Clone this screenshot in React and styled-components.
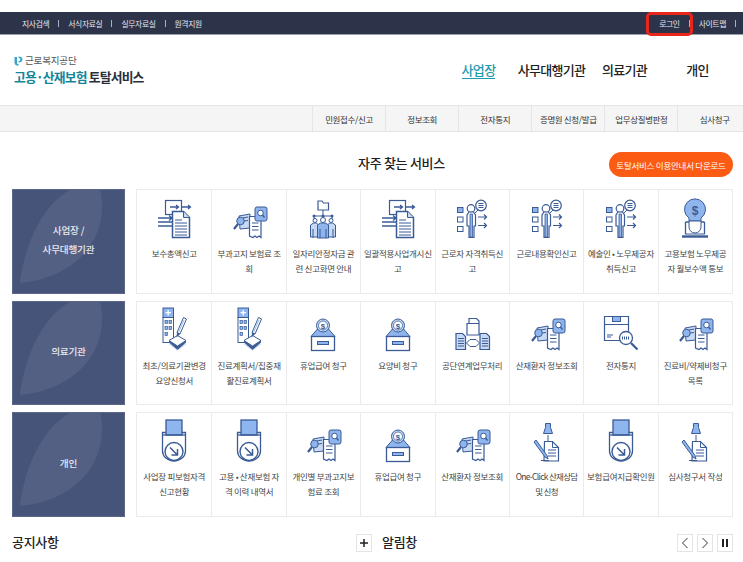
import React from 'react';
import styled, { createGlobalStyle } from 'styled-components';

const GlobalStyle = createGlobalStyle`
  html, body {
    margin: 0;
    padding: 0;
    background: #fff;
    overflow: hidden;
  }
  body {
    font-family: "Noto Sans CJK KR", "Noto Sans", sans-serif;
    color: #333;
  }
  * { box-sizing: border-box; }
`;

const STROKE = '#3a5b96';
const FILL = '#8fb5ee';
const PALE = '#c8d9f4';

const Page = styled.div`
  width: 743px;
  height: 562px;
  padding-top: 12px;
`;

const TopBar = styled.div`
  height: 23px;
  background: #2d3349;
  border-bottom: 1px solid #9aa0ad;
  display: flex;
  justify-content: space-between;
  align-items: center;
  padding: 0 6px 0 22px;
`;

const TopList = styled.div`
  display: flex;
  align-items: center;
  gap: 8px;
`;

const TopLink = styled.a`
  position: relative;
  font-size: 7.8px;
  letter-spacing: -0.35px;
  color: #e6e8ee;
  white-space: nowrap;

  ${props => props.highlight && `
    &::after {
      content: '';
      position: absolute;
      left: -13px;
      right: -13px;
      top: -6px;
      bottom: -7px;
      border: 3.5px solid #e8261c;
      border-radius: 5px;
    }
  `}
`;

const TopSep = styled.span`
  width: 1px;
  height: 7px;
  margin: 0 1px;
  background: #a9aebb;
`;

const Header = styled.header`
  height: 70px;
  display: flex;
  justify-content: space-between;
  align-items: center;
  padding: 0 9px 0 14px;
`;

const Logo = styled.div`
  display: flex;
  flex-direction: column;
  gap: 1px;
`;

const LogoTop = styled.div`
  display: flex;
  align-items: center;
  gap: 2px;
  font-size: 9.5px;
  line-height: 13px;
  letter-spacing: -0.15px;
  color: #555;
`;

const LogoMain = styled.div`
  font-size: 12.8px;
  line-height: 18px;
  font-weight: 700;
  letter-spacing: -0.8px;
  color: #2a2f3a;

  span {
    color: #15859a;
  }
`;

const MainNav = styled.nav`
  display: grid;
  grid-template-columns: repeat(4, 73px);
`;

const MainNavItem = styled.a`
  justify-self: center;
  font-size: 13px;
  line-height: 17px;
  font-weight: 500;
  letter-spacing: -0.7px;
  white-space: nowrap;
  color: ${props => (props.active ? '#1b9bb0' : '#222')};
  border-bottom: ${props => (props.active ? '1px solid #1b9bb0' : '1px solid transparent')};
`;

const SubNav = styled.div`
  height: 27px;
  background: #f5f5f5;
  border-top: 1px solid #e5e5e5;
  border-bottom: 1px solid #e5e5e5;
  display: grid;
  grid-template-columns: 312px repeat(5, 73.1px) 1fr;
`;

const SubNavItem = styled.a`
  grid-column: ${props => props.index + 2};
  display: flex;
  align-items: center;
  justify-content: center;
  padding-left: ${props => (props.index === 5 ? '8px' : '0')};
  border-left: 1px solid #e5e5e5;
  font-size: 8.5px;
  letter-spacing: -0.35px;
  color: #333;
  white-space: nowrap;
`;

const TitleRow = styled.div`
  height: 57px;
  display: flex;
  align-items: center;
  padding: 8px 10px 0 358px;
`;

const Title = styled.h2`
  margin: 0 0 4px;
  font-size: 13px;
  font-weight: 500;
  letter-spacing: -0.3px;
  color: #222;
`;

const GuideButton = styled.button`
  margin-left: auto;
  width: 124px;
  height: 25px;
  border: none;
  border-radius: 13px;
  background: #fb5b12;
  color: #fff;
  font-family: inherit;
  font-size: 8.5px;
  letter-spacing: -0.25px;
  padding: 0;
`;

const Rows = styled.div`
  display: flex;
  flex-direction: column;
  gap: 7px;
  padding: 0 10px 0 12px;
`;

const Row = styled.section`
  display: grid;
  grid-template-columns: 113px 1fr;
  column-gap: 11px;
  height: 104.5px;
`;

const SidePanel = styled.div`
  position: relative;
  overflow: hidden;
  background: #47547a;
  border: 1px solid #5a6789;
  padding-bottom: 2px;
  display: flex;
  align-items: center;
  justify-content: center;
  text-align: center;
  color: #e8e9ee;
  font-size: 9.6px;
  font-weight: 500;
  line-height: 19px;
  letter-spacing: -0.2px;
  white-space: pre-line;
`;

const PanelLeaf = styled.svg`
  position: absolute;
  inset: 0;
  width: 100%;
  height: 100%;
`;

const PanelText = styled.span`
  position: relative;
`;

const Grid = styled.div`
  display: grid;
  grid-template-columns: repeat(8, 1fr);
  border: 1px solid #ebebeb;
`;

const Cell = styled.a`
  display: flex;
  flex-direction: column;
  align-items: center;
  min-width: 0;
  border-left: ${props => (props.first ? 'none' : '1px solid #ebebeb')};
`;

const IconSlot = styled.div`
  height: 50px;
  display: flex;
  align-items: flex-end;
  margin-bottom: 6px;

  svg {
    display: block;
  }
`;

const CellLabel = styled.span`
  font-size: 8.5px;
  line-height: 15px;
  letter-spacing: ${props => (props.tight ? '-0.7px' : '-0.3px')};
  color: #444;
  text-align: center;
  white-space: pre-line;
`;

const Footer = styled.div`
  display: flex;
  align-items: center;
  margin-top: 15px;
  padding: 0 10px 0 12px;
`;

const NoticeHead = styled.div`
  width: 360px;
  display: flex;
  align-items: center;
  justify-content: space-between;
`;

const FooterTitle = styled.h3`
  margin: 0 0 3px;
  font-size: 13px;
  font-weight: 500;
  letter-spacing: -0.3px;
  color: #222;
`;

const AlertHead = styled.div`
  flex: 1;
  display: flex;
  align-items: center;
  justify-content: space-between;
  padding-left: 10px;
`;

const Controls = styled.div`
  display: flex;
  gap: 3.5px;
`;

const SquareButton = styled.button`
  width: 16.5px;
  height: 18px;
  padding: 0;
  background: #fff;
  border: 1px solid #e4e4e4;
  display: flex;
  align-items: center;
  justify-content: center;
`;

const Line = ({ d }) => <path d={d} fill="none" stroke={STROKE} strokeWidth="1" />;

const DocArrows = () => (
  <svg width="48" height="48" viewBox="0 0 48 48">
    <rect x="15.5" y="8.5" width="16" height="14" fill="#fff" stroke={STROKE} strokeWidth="1.2" />
    <path d="M22.5 19.5h11l6 6v20h-17z" fill="#fff" stroke={STROKE} strokeWidth="1.5" />
    <path d="M33.5 19.5v6h6" fill={PALE} stroke={STROKE} />
    <Line d="M25 28h7M25 31h12M25 34h12M25 37h12M25 40h12M25 43h12" />
    <path d="M20 15h8M26 13l2.500 2-2.500 2M31 15h9M38 13l2.500 2-2.500 2" fill="none" stroke={STROKE} strokeWidth="1.300" />
    <path d="M8 26h14M8 30h14M8 34h14M19 23.500l3 2.500-3 2.500" fill="none" stroke={STROKE} strokeWidth="1.300" />
  </svg>
);

const ReceiptSearch = () => (
  <svg width="48" height="48" viewBox="0 0 48 48">
    <path d="M14 24l11-2v14l-10 1z" fill={PALE} stroke={STROKE} />
    <Line d="M18 26l5-1M19 29l4-.5" />
    <circle cx="15.500" cy="29" r="3.800" fill={FILL} stroke={STROKE} />
    <path d="M13 32L9 37" stroke={STROKE} strokeWidth="2.200" />
    <path d="M24.500 24.500h11.500v21l-2-1.500-2 1.500-2-1.500-2 1.500-3.500-1.500z" fill="#fff" stroke={STROKE} strokeWidth="1.200" />
    <Line d="M27 31h6.500M27 34.500h6.500M27 38h6.500" />
    <rect x="30" y="15" width="12" height="14" rx="2" fill={FILL} stroke={STROKE} />
    <circle cx="35.500" cy="21" r="2.800" fill="#fff" stroke={STROKE} />
    <path d="M37.500 23l2 2.500" stroke={STROKE} strokeWidth="1.300" />
  </svg>
);

const OrgPeople = () => (
  <svg width="48" height="48" viewBox="0 0 48 48">
    <path d="M19 9h4l1.500 2h5v7h-10.500z" fill="#fff" stroke={STROKE} strokeWidth="1.200" />
    <Line d="M24 18v9M15 24h18M15 24v3M33 24v3" />
    <circle cx="24" cy="24" r="1.500" fill={STROKE} />
    <circle cx="15" cy="24" r="1.500" fill={STROKE} />
    <circle cx="33" cy="24" r="1.500" fill={STROKE} />
    <path d="M11.500 45V33l3-2h3l2 2v12z" fill={PALE} stroke={STROKE} />
    <path d="M28.500 45V33l2-2h3l3 2v12z" fill={PALE} stroke={STROKE} />
    <circle cx="16" cy="28.500" r="2" fill="#fff" stroke={STROKE} />
    <circle cx="32" cy="28.500" r="2" fill="#fff" stroke={STROKE} />
    <path d="M18.500 46V33l3-2h5l3 2v13z" fill={FILL} stroke={STROKE} />
    <circle cx="24" cy="28" r="2.500" fill="#fff" stroke={STROKE} />
    <Line d="M14 37v9M34 37v9M21 37v9M27 37v9" />
  </svg>
);

const PersonList = () => (
  <svg width="48" height="48" viewBox="0 0 48 48">
    <rect x="9.500" y="15.500" width="5.500" height="5" fill={FILL} stroke={STROKE} />
    <rect x="9.500" y="25" width="5.500" height="5" fill="#fff" stroke={STROKE} />
    <rect x="9.500" y="34.500" width="5.500" height="5" fill="#fff" stroke={STROKE} />
    <circle cx="23" cy="16.500" r="3.800" fill="#fff" stroke={STROKE} strokeWidth="1.200" />
    <path d="M19 34V23l2-3h4.500l2 3v11h-1.500v11.500h-5V34z" fill="#fff" stroke={STROKE} strokeWidth="1.200" />
    <path d="M22 22h2.500v23h-2.500z" fill={FILL} stroke={STROKE} strokeWidth="0.800" />
    <path d="M27 21l3-3" stroke={STROKE} />
    <circle cx="33" cy="13.500" r="5.300" fill="#fff" stroke={STROKE} strokeWidth="1.200" />
    <Line d="M30.500 11.500h5M30.500 13.500h5M30.500 15.500h5" />
    <path d="M30 25h8.500M36 22.500l2.500 2.500-2.500 2.500M30 33.500h8.500M36 31l2.500 2.500-2.500 2.500" fill="none" stroke={STROKE} strokeWidth="1.200" />
  </svg>
);

const MoneyBulb = () => (
  <svg width="48" height="48" viewBox="0 0 48 48">
    <path d="M14.500 30v12M33.500 30v12M14.500 30h4M33.500 30h-4" fill="none" stroke={STROKE} strokeWidth="1.300" />
    <path d="M18 26a10.500 10.500 0 1 1 12 0v3h-12z" fill={FILL} stroke={STROKE} />
    <path d="M18 29h12v6a6 6 0 0 1-12 0z" fill="#fff" stroke={STROKE} />
    <text x="24" y="23" textAnchor="middle" fontSize="12" fontWeight="700" fill={STROKE} fontFamily="Liberation Sans, sans-serif">$</text>
    <path d="M11 44.500h26" stroke={STROKE} strokeWidth="2.400" />
    <path d="M14 42h20" stroke={STROKE} />
  </svg>
);

const BuildingPen = () => (
  <svg width="48" height="48" viewBox="0 0 48 48">
    <rect x="13" y="4" width="10.500" height="9.500" fill={FILL} stroke={STROKE} />
    <path d="M18.200 6v5.500M15.500 8.700h5.500" stroke="#fff" strokeWidth="1.300" />
    <rect x="13" y="13.500" width="10.500" height="25" fill="#fff" stroke={STROKE} />
    <g fill={FILL} stroke={STROKE} strokeWidth="0.700">
      <rect x="15" y="16.500" width="2.500" height="3" />
      <rect x="19" y="16.500" width="2.500" height="3" />
      <rect x="15" y="22.500" width="2.500" height="3" />
      <rect x="19" y="22.500" width="2.500" height="3" />
      <rect x="15" y="28.500" width="2.500" height="3" />
    </g>
    <path d="M19 38.500l8.500 7.500 8.500-7.500v-2l-8.500 5.500-8.500-5.500z" fill={STROKE} />
    <path d="M19 36.500l8.500-5 8.500 5-8.500 5.500z" fill="#fff" stroke={STROKE} />
    <path d="M19 40l8.500 6 8.500-6" fill="none" stroke="#9db5dc" strokeWidth="0.600" />
    <path d="M33.500 13.500l3 1.500-6.500 15-3-1.500z" fill="#fff" stroke={STROKE} />
    <path d="M34 16l-5.500 12.500" stroke={FILL} strokeWidth="0.900" />
    <path d="M27 28.500l-.5 5 3.500-3.500z" fill={STROKE} />
  </svg>
);

const BoxCoin = () => (
  <svg width="48" height="48" viewBox="0 0 48 48">
    <path d="M18.500 25h11l6.500 7.500h-24z" fill={FILL} stroke={STROKE} />
    <circle cx="24" cy="21.500" r="6.500" fill={PALE} stroke={STROKE} />
    <circle cx="24" cy="21.500" r="4.500" fill="#fff" stroke={STROKE} strokeWidth="0.800" />
    <text x="24" y="24.500" textAnchor="middle" fontSize="8" fontWeight="700" fill={STROKE} fontFamily="Liberation Sans, sans-serif">$</text>
    <rect x="12.500" y="32.500" width="23" height="14" fill="#fff" stroke={STROKE} strokeWidth="1.300" />
    <rect x="18.500" y="37.500" width="11" height="3" fill={FILL} stroke={STROKE} />
  </svg>
);

const FolderDocs = () => (
  <svg width="48" height="48" viewBox="0 0 48 48">
    <path d="M21 19v-4.500h7.500l2.500 2.500v2" fill="#fff" stroke={STROKE} strokeWidth="1.200" />
    <path d="M19 19.500h12v11.500h-12z" fill="#fff" stroke={STROKE} strokeWidth="1.200" />
    <path d="M8 29.500h6.500l3 3v13h-9.500z" fill={PALE} stroke={STROKE} strokeWidth="1.200" />
    <path d="M32 29.500h6.500l3 3v13h-9.500z" fill={PALE} stroke={STROKE} strokeWidth="1.200" />
    <Line d="M10 34.500h6M10 37h6M10 39.500h6M10 42h6M34 34.500h6M34 37h6M34 39.500h6M34 42h6" />
    <path d="M18.500 39l3.500-3.500h6l3.500 3.500-3.500 3.500h-6z" fill="#fff" stroke={STROKE} />
  </svg>
);

const BoxSearch = () => (
  <svg width="48" height="48" viewBox="0 0 48 48">
    <path d="M7.500 12.500h24v24h-24zM7.500 20.500h24" fill="#fff" stroke={STROKE} strokeWidth="1.200" />
    <rect x="15.500" y="12.500" width="8" height="5" fill={FILL} stroke={STROKE} />
    <Line d="M10 33h4M10 31h6" />
    <circle cx="29" cy="34" r="6.500" fill="#fff" stroke={STROKE} strokeWidth="1.300" />
    <path d="M25.500 32.500v3M27.500 32.500v3M29.500 32.500v3M31.500 32.500v3" stroke={STROKE} />
    <path d="M34 39l6.500 6.500" stroke={STROKE} strokeWidth="2.200" />
  </svg>
);

const ScanArrow = () => (
  <svg width="48" height="48" viewBox="0 0 48 48">
    <path d="M12.500 17.500h23V36a11.500 10 0 0 1-23 0z" fill="#fff" stroke={STROKE} strokeWidth="1.300" />
    <rect x="16" y="5" width="16" height="15" fill={FILL} stroke={STROKE} strokeWidth="1.300" />
    <path d="M12.500 20h23" stroke={STROKE} strokeWidth="1.300" />
    <circle cx="24" cy="36.500" r="9" fill="#fff" stroke={STROKE} strokeWidth="1.400" />
    <path d="M20 32.500l7.500 7.500M27.500 34v6h-6" fill="none" stroke={STROKE} strokeWidth="1.500" />
  </svg>
);

const PinDoc = () => (
  <svg width="48" height="48" viewBox="0 0 48 48">
    <path d="M25 20v12" stroke={STROKE} />
    <path d="M22.500 8.500h5v4l2 6h-9l2-6z" fill={FILL} stroke={STROKE} />
    <path d="M21.500 26.500h8l6 6v13.500h-14.500z" fill="#fff" stroke={STROKE} strokeWidth="1.200" />
    <path d="M29.500 26.500v6h6" fill="none" stroke={STROKE} />
    <Line d="M25 35h8M25 38h8M25 41h8" />
    <path d="M13 25l-2 2 11 15 3 2-1-3.500z" fill={FILL} stroke={STROKE} />
    <path d="M18 45.500h8" stroke={STROKE} />
  </svg>
);

const topLeft = ['지사검색', '서식자료실', '실무자료실', '원격지원'];
const mainNav = ['사업장', '사무대행기관', '의료기관', '개인'];
const subNav = ['민원접수/신고', '정보조회', '전자통지', '증명원 신청/발급', '업무상질병판정', '심사청구'];

const sections = [
  {
    name: '사업장 /\n사무대행기관',
    items: [
      [DocArrows, '보수총액신고'],
      [ReceiptSearch, '부과고지 보험료 조\n회'],
      [OrgPeople, '일자리안정자금 관\n련 신고화면 안내'],
      [DocArrows, '일괄적용사업개시신\n고'],
      [PersonList, '근로자 자격취득신\n고'],
      [PersonList, '근로내용확인신고'],
      [PersonList, '예술인 • 노무제공자\n취득신고'],
      [MoneyBulb, '고용보험 노무제공\n자 월보수액 통보'],
    ],
  },
  {
    name: '의료기관',
    items: [
      [BuildingPen, '최초/의료기관변경\n요양신청서'],
      [BuildingPen, '진료계획서/집중재\n활진료계획서'],
      [BoxCoin, '휴업급여 청구'],
      [BoxCoin, '요양비 청구'],
      [FolderDocs, '공단연계업무처리'],
      [ReceiptSearch, '산재환자 정보조회'],
      [BoxSearch, '전자통지'],
      [ReceiptSearch, '진료비/약제비청구\n목록'],
    ],
  },
  {
    name: '개인',
    items: [
      [ScanArrow, '사업장 피보험자격\n신고현황'],
      [ScanArrow, '고용 • 산재보험 자\n격 이력 내역서'],
      [ReceiptSearch, '개인별 부과고지보\n험료 조회'],
      [BoxCoin, '휴업급여 청구'],
      [ReceiptSearch, '산재환자 정보조회'],
      [PinDoc, 'One-Click 산재상담\n및 신청'],
      [ScanArrow, '보험급여지급확인원'],
      [PinDoc, '심사청구서 작성'],
    ],
  },
];

function App() {
  return (
    <Page>
      <GlobalStyle />
      <TopBar>
        <TopList>
          {topLeft.map((label, i) => (
            <React.Fragment key={label}>
              {i > 0 && <TopSep />}
              <TopLink>{label}</TopLink>
            </React.Fragment>
          ))}
        </TopList>
        <TopList>
          <TopLink highlight>로그인</TopLink>
          <TopSep />
          <TopLink>사이트맵</TopLink>
          <TopSep />
        </TopList>
      </TopBar>

      <Header>
        <Logo>
          <LogoTop>
            <svg width="9" height="10" viewBox="0 0 9 10">
              <path d="M0.500 1h2.500v5.500c0 1 .5 1.500 1.500 1.500v1.800C2 9.800 0.500 8.500 0.500 6.500z" fill="#3aa6c8" />
              <path d="M4.500 0.500C7 0.500 8.500 1.500 8.500 3.500S7 6.500 4.500 6.500V5c1 0 1.800-.5 1.800-1.500S5.500 2 4.500 2z" fill="#3aa6c8" />
            </svg>
            근로복지공단
          </LogoTop>
          <LogoMain><span>고용·산재보험</span> 토탈서비스</LogoMain>
        </Logo>
        <MainNav>
          {mainNav.map((label, i) => (
            <MainNavItem key={label} active={i === 0}>{label}</MainNavItem>
          ))}
        </MainNav>
      </Header>

      <SubNav>
        {subNav.map((label, i) => (
          <SubNavItem key={label} index={i}>{label}</SubNavItem>
        ))}
      </SubNav>

      <TitleRow>
        <Title>자주 찾는 서비스</Title>
        <GuideButton>토탈서비스 이용안내서 다운로드</GuideButton>
      </TitleRow>

      <Rows>
        {sections.map(section => (
          <Row key={section.name}>
            <SidePanel>
              <PanelLeaf viewBox="0 0 113 104" preserveAspectRatio="none">
                <path d="M58 0C30 15 12 55 7 94 50 92 100 60 89 0z" fill="#fff" opacity="0.07" />
              </PanelLeaf>
              <PanelText>{section.name}</PanelText>
            </SidePanel>
            <Grid>
              {section.items.map(([Icon, label], i) => (
                <Cell key={label} first={i === 0}>
                  <IconSlot><Icon /></IconSlot>
                  <CellLabel tight={label.startsWith('One')}>{label}</CellLabel>
                </Cell>
              ))}
            </Grid>
          </Row>
        ))}
      </Rows>

      <Footer>
        <NoticeHead>
          <FooterTitle>공지사항</FooterTitle>
          <SquareButton aria-label="더보기">
            <svg width="10" height="10" viewBox="0 0 10 10">
              <path d="M5 1v8M1 5h8" stroke="#222" strokeWidth="1.500" />
            </svg>
          </SquareButton>
        </NoticeHead>
        <AlertHead>
          <FooterTitle>알림창</FooterTitle>
          <Controls>
            <SquareButton aria-label="이전">
              <svg width="8" height="12" viewBox="0 0 8 12">
                <path d="M6.500 1L1.500 6l5 5" fill="none" stroke="#333" />
              </svg>
            </SquareButton>
            <SquareButton aria-label="다음">
              <svg width="8" height="12" viewBox="0 0 8 12">
                <path d="M1.500 1l5 5-5 5" fill="none" stroke="#333" />
              </svg>
            </SquareButton>
            <SquareButton aria-label="정지">
              <svg width="8" height="10" viewBox="0 0 8 10">
                <path d="M2 1v8M6 1v8" stroke="#222" strokeWidth="2" />
              </svg>
            </SquareButton>
          </Controls>
        </AlertHead>
      </Footer>
    </Page>
  );
}

export default App;
